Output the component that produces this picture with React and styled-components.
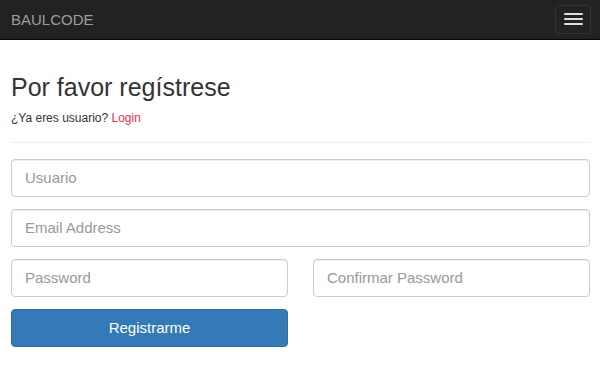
import React from "react";
import styled, { createGlobalStyle } from "styled-components";

const GlobalStyle = createGlobalStyle`
  * { box-sizing: border-box; }
  body {
    margin: 0;
    background: #fff;
    font-family: "Liberation Sans", Arial, sans-serif;
    color: #333;
  }
`;

function App() {
  return (
    <>
      <GlobalStyle />
      <Navbar>
        <Brand>BAULCODE</Brand>
        <Toggle aria-label="menu">
          <Bar />
          <Bar />
          <Bar />
        </Toggle>
      </Navbar>
      <Container>
        <Title>Por favor regístrese</Title>
        <Subtitle>
          ¿Ya eres usuario? <LoginLink href="#">Login</LoginLink>
        </Subtitle>
        <Divider />
        <Form onSubmit={(e) => e.preventDefault()}>
          <Input type="text" placeholder="Usuario" />
          <Input type="email" placeholder="Email Address" />
          <Row>
            <Input type="password" placeholder="Password" />
            <Input type="password" placeholder="Confirmar Password" />
          </Row>
          <Row>
            <Button type="submit">Registrarme</Button>
          </Row>
        </Form>
      </Container>
    </>
  );
}

export default App;

const Navbar = styled.nav`
  height: 40px;
  background: #222;
  border-bottom: 1px solid #080808;
  display: flex;
  align-items: center;
  justify-content: space-between;
  padding: 0 9px 0 11px;
`;

const Brand = styled.a`
  color: #9d9d9d;
  font-size: 15px;
  text-decoration: none;
  line-height: 1;
`;

const Toggle = styled.button`
  width: 36px;
  height: 29px;
  margin-top: -1px;
  background: transparent;
  border: 1px solid #333;
  border-radius: 4px;
  display: flex;
  flex-direction: column;
  align-items: center;
  justify-content: center;
  gap: 3px;
  padding: 0;
`;

const Bar = styled.span`
  display: block;
  width: 19px;
  height: 2px;
  border-radius: 1px;
  background: #ddd;
`;

const Container = styled.main`
  padding: 0 10px 0 11px;
`;

const Title = styled.h1`
  margin: 34px 0 0;
  font-size: 25px;
  font-weight: 500;
  line-height: 1.1;
  color: #333;
`;

const Subtitle = styled.p`
  margin: 8px 0 0;
  font-size: 12px;
  line-height: 17px;
  color: #333;
`;

const LoginLink = styled.a`
  color: #ec2f4b;
  text-decoration: none;
`;

const Divider = styled.hr`
  margin: 15px 0 16px;
  border: 0;
  border-top: 1px solid #eee;
`;

const Form = styled.form`
  display: flex;
  flex-direction: column;
  gap: 12px;
`;

const Row = styled.div`
  display: grid;
  grid-template-columns: 1fr 1fr;
  column-gap: 25px;
`;

const Input = styled.input`
  display: block;
  width: 100%;
  height: 38px;
  padding: 6px 13px;
  font-family: "Liberation Sans", Arial, sans-serif;
  font-size: 15px;
  color: #555;
  background: #fff;
  border: 1px solid #ccc;
  border-radius: 4px;
  box-shadow: inset 0 1px 1px rgba(0, 0, 0, 0.075);
  outline: none;
  &::placeholder {
    color: #999;
  }
`;

const Button = styled.button`
  height: 38px;
  width: 100%;
  background: #337ab7;
  border: 1px solid #2e6da4;
  border-radius: 4px;
  color: #fff;
  font-family: "Liberation Sans", Arial, sans-serif;
  font-size: 15px;
  cursor: pointer;
`;
